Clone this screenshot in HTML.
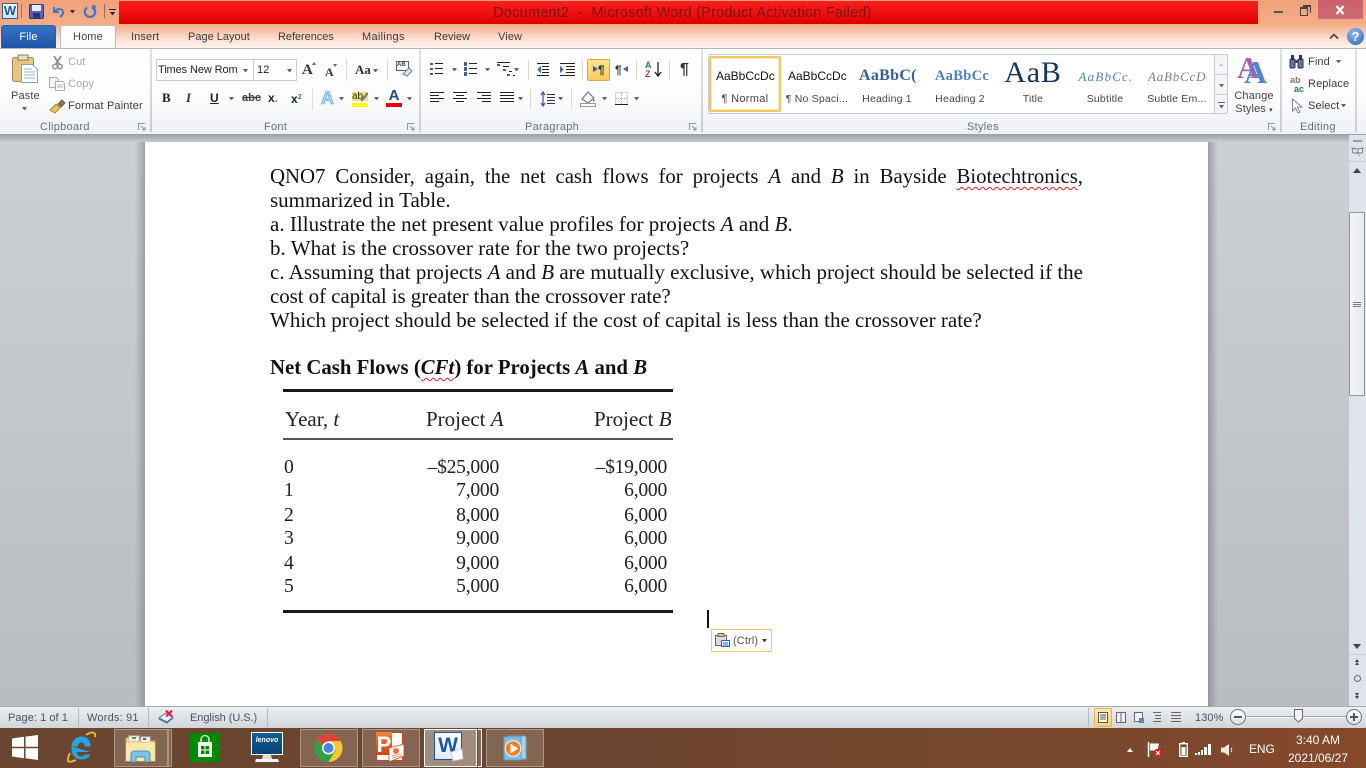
<!DOCTYPE html>
<html><head><meta charset="utf-8"><title>Document2 - Microsoft Word</title>
<style>
html,body{margin:0;padding:0;width:1366px;height:768px;overflow:hidden;background:#ccc}
*{box-sizing:border-box}
.a{position:absolute}
.u{position:absolute;font:11px/14px "Liberation Sans",sans-serif;color:#3c3c3c;white-space:nowrap;letter-spacing:.12px}
.c{text-align:center}
.d{position:absolute;font:21px/24px "Liberation Serif",serif;color:#111;white-space:nowrap;left:270px}
.j{width:813px;text-align:justify;text-align-last:justify;white-space:normal}
.t{position:absolute;font:19.6px/24px "Liberation Serif",serif;color:#222;white-space:nowrap;filter:blur(.35px);letter-spacing:-.25px}
.h{font-size:21px;letter-spacing:0}
.r{text-align:right}
.tr{position:absolute;width:5px;height:0;border-left:2.5px solid transparent;border-right:2.5px solid transparent;border-top:3px solid #666}
.sep{position:absolute;width:1px;background:#d5d8dd}
.gsep{position:absolute;top:49px;height:83px;width:2px;background:linear-gradient(#dfe2e6,#c9ccd2)}
.sq{text-decoration:underline wavy #d22;text-decoration-thickness:1px;text-underline-offset:3px}
.lb{position:absolute;top:121px;font:11px/13px "Liberation Sans",sans-serif;color:#64707f;letter-spacing:.3px;white-space:nowrap}
.st{position:absolute;top:92px;font:10.5px/14px "Liberation Sans",sans-serif;color:#444;letter-spacing:.2px;white-space:nowrap;text-align:center}
.ss{position:absolute;white-space:nowrap;overflow:hidden;text-align:center}
.tb{position:absolute;top:729px;height:38px;background:rgba(255,255,255,.17);border:1px solid rgba(255,255,255,.32)}
svg{position:absolute;overflow:visible}
</style></head><body>

<!-- chrome background -->
<div class="a" style="left:0;top:0;width:1366px;height:48px;background:linear-gradient(#f0a27a 0,#f4ac85 24px,#fbdccd 38px,#fff4ef 48px)"></div>
<div class="a" style="left:119px;top:1px;width:1139px;height:23px;background:linear-gradient(#fb1f1f,#f01010 50%,#dd0000)"></div>
<div class="u c" style="left:119px;top:5px;width:1127px;font-size:14.4px;line-height:16px;color:#7d1010;letter-spacing:.28px">Document2&nbsp; -&nbsp; Microsoft Word (Product Activation Failed)</div>

<!-- QAT -->
<div class="a" style="left:2px;top:3px;width:16px;height:16px;background:linear-gradient(#fff,#cfe0f5);border:1px solid #2a62a8"></div>
<div class="a" style="left:3px;top:3px;width:14px;font:bold 13px/16px 'Liberation Sans',sans-serif;color:#1c56a6;text-align:center">W</div>
<div class="a" style="left:21px;top:4px;width:1px;height:14px;background:#9b7a66"></div>
<svg style="left:29px;top:4px" width="15" height="15"><rect x=".5" y=".5" width="14" height="14" rx="1" fill="#5560c0" stroke="#333a7a"/><rect x="3" y="1" width="9" height="6" fill="#e8ecf5"/><rect x="4" y="9" width="7" height="5" fill="#2e3468"/></svg>
<svg style="left:52px;top:5px" width="13" height="13"><path d="M2 2v5h5M2.5 7C5 3 11 3 11 7.5c0 2-1.500 3.500-3 4.500" fill="none" stroke="#3b78c8" stroke-width="2"/></svg>
<div class="tr" style="left:70px;top:10px;border-top-color:#333"></div>
<svg style="left:83px;top:5px" width="14" height="14"><path d="M4 2.500A5.200 5.200 0 1 0 10 2.500M10 0v4h-.1M10 3l3-2" fill="none" stroke="#3a78c9" stroke-width="2.200"/></svg>
<div class="a" style="left:104px;top:4px;width:1px;height:14px;background:#8f6f5c"></div>
<div class="a" style="left:109px;top:9px;width:7px;height:1px;background:#222"></div>
<div class="tr" style="left:110px;top:12px;border-top-color:#222"></div>

<!-- Window controls -->
<div class="a" style="left:1274px;top:11px;width:9px;height:2px;background:#555;"></div>
<div class="a" style="left:1300px;top:7px;width:8px;height:9px;border:1.500px solid #444;border-top-width:2px"></div>
<div class="a" style="left:1303px;top:5px;width:8px;height:8px;border:1px solid #444;border-top-width:2px;border-left:none;border-bottom:none"></div>
<div class="a" style="left:1318px;top:0;width:45px;height:19px;background:linear-gradient(#c9606a,#cd6d72)"></div>
<svg style="left:1334px;top:5px" width="13" height="10"><path d="M2.500 1l7 8M9.500 1l-7 8" stroke="#fff" stroke-width="2.200"/></svg>

<!-- tabs -->
<div class="a" style="left:1px;top:25px;width:55px;height:23px;background:linear-gradient(#3373c4,#1f55a8);border:1px solid #2a5da8;border-bottom:none;border-radius:3px 3px 0 0"></div>
<div class="u c" style="left:1px;top:30px;width:55px;color:#fff;">File</div>
<div class="a" style="left:60px;top:25px;width:56px;height:24px;background:linear-gradient(#fff,#fafafa);border:1px solid #b8bcc4;border-bottom:none;border-radius:3px 3px 0 0"></div>
<div class="u" style="left:73px;top:30px;color:#444">Home</div>
<div class="u" style="left:131px;top:30px">Insert</div>
<div class="u" style="left:188px;top:30px;letter-spacing:0">Page Layout</div>
<div class="u" style="left:278px;top:30px;letter-spacing:-.05px">References</div>
<div class="u" style="left:362px;top:30px;letter-spacing:.3px">Mailings</div>
<div class="u" style="left:434px;top:30px;letter-spacing:0">Review</div>
<div class="u" style="left:498px;top:30px">View</div>
<svg style="left:1329px;top:33px" width="10" height="7"><path d="M1 5.500L5 1.500l4 4" fill="none" stroke="#444" stroke-width="1.600"/></svg>
<div class="a" style="left:1347px;top:28px;width:17px;height:17px;border-radius:50%;background:radial-gradient(circle at 40% 30%,#8fb6ea,#2a66c0);font:bold 13px/17px 'Liberation Sans',sans-serif;color:#fff;text-align:center">?</div>

<!-- ribbon -->
<div class="a" style="left:0;top:48px;width:1366px;height:87px;background:linear-gradient(#fff 0,#fdfdfe 55%,#eef0f3 100%);border-top:1px solid #b3b8bf;border-bottom:1px solid #9ea2a8"></div>
<div class="gsep" style="left:150px"></div>
<div class="gsep" style="left:419px"></div>
<div class="gsep" style="left:701px"></div>
<div class="gsep" style="left:1280px"></div>
<div class="gsep" style="left:1355px"></div>

<!-- clipboard -->
<svg style="left:12px;top:54px" width="27" height="30"><rect x=".5" y="3.500" width="21" height="24" rx="2" fill="#e7c486" stroke="#a98a5a"/><rect x="6" y="1" width="10" height="5" fill="#e9dcc0" stroke="#8a7a5a"/><path d="M9.500 10.500h11l5 5v13h-16z" fill="#fbfcff" stroke="#8fa0b5"/><path d="M12 15h8M12 18h11M12 21h11M12 24h11" stroke="#9db0c6"/></svg>
<div class="u" style="left:11px;top:89px;color:#444">Paste</div>
<div class="tr" style="left:22px;top:107px"></div>
<svg style="left:51px;top:55px" width="14" height="15"><path d="M3 1l5 8M10 1l-5 8" stroke="#8d8d8d" stroke-width="1.800"/><circle cx="4" cy="11.500" r="2.300" fill="none" stroke="#8d8d8d" stroke-width="1.400"/><circle cx="9" cy="11.500" r="2.300" fill="none" stroke="#8d8d8d" stroke-width="1.400"/></svg>
<div class="u" style="left:68px;top:55px;color:#a4a8ae">Cut</div>
<svg style="left:49px;top:77px" width="16" height="14"><path d="M.5.500h7l2 2v8h-9z" fill="#f2f3f5" stroke="#a8adb4"/><path d="M6.500 4.500h7l2 2v7h-9z" fill="#fafafb" stroke="#a8adb4"/><path d="M8 8h6M8 10h6" stroke="#b5b9c0"/></svg>
<div class="u" style="left:68px;top:77px;color:#a4a8ae">Copy</div>
<svg style="left:49px;top:99px" width="17" height="15"><path d="M9 5l4-4 3 3-4 4z" fill="#8a7a50" stroke="#6a5a3a"/><path d="M1 11l6-6 4 4-5 5c-2-1-3-2-5-3z" fill="#e4c565" stroke="#a88a3a"/></svg>
<div class="u" style="left:68px;top:99px;letter-spacing:.15px">Format Painter</div>
<div class="lb" style="left:40px">Clipboard</div>
<svg style="left:138px;top:123px" width="8" height="8"><path d="M.5 7V.5H7" fill="none" stroke="#8a97a8"/><path d="M3 3l3.500 3.500M7 4v3H4" fill="none" stroke="#8a97a8"/></svg>

<!-- font -->
<div class="a" style="left:156px;top:59px;width:98px;height:22px;background:#fff;border:1px solid #c8ccd2"></div>
<div class="a" style="left:254px;top:59px;width:43px;height:22px;background:#fff;border:1px solid #c8ccd2;border-left:none"></div>
<div class="u" style="left:158px;top:63px;color:#222;letter-spacing:-.1px">Times New Rom</div>
<div class="tr" style="left:243px;top:69px"></div>
<div class="u" style="left:257px;top:63px;color:#222">12</div>
<div class="tr" style="left:287px;top:69px"></div>
<div class="a" style="left:302px;top:60px;font:bold 15px/20px 'Liberation Serif',serif;color:#333">A</div>
<div class="a" style="left:312px;top:62px;width:0;border:2.500px solid transparent;border-bottom:3px solid #3a6fae;border-top:none"></div>
<div class="a" style="left:325px;top:64px;font:bold 12px/16px 'Liberation Serif',serif;color:#333">A</div>
<div class="a" style="left:333px;top:64px;width:0;border:2.500px solid transparent;border-top:3px solid #3a6fae;border-bottom:none"></div>
<div class="a" style="left:346px;top:59px;width:1px;height:22px;background:#d8dbe0"></div>
<div class="a" style="left:355px;top:61px;font:bold 13px/18px 'Liberation Serif',serif;color:#333">Aa</div>
<div class="tr" style="left:373px;top:69px"></div>
<div class="a" style="left:387px;top:59px;width:1px;height:22px;background:#d8dbe0"></div>
<svg style="left:396px;top:61px" width="17" height="18"><rect x=".5" y=".5" width="12" height="9" fill="#fff" stroke="#4a6488"/><path d="M7 13l6-6 3 3-5 5z" fill="#dfe8f2" stroke="#6a7f9a"/></svg>
<div class="a" style="left:397px;top:62px;font:bold 6px/7px 'Liberation Sans',sans-serif;color:#345">AB</div>

<div class="a" style="left:162px;top:89px;font:bold 13px/18px 'Liberation Serif',serif;color:#222">B</div>
<div class="a" style="left:186px;top:89px;font:italic bold 13px/18px 'Liberation Serif',serif;color:#333">I</div>
<div class="a" style="left:210px;top:89px;font:bold 12px/18px 'Liberation Sans',sans-serif;color:#222;text-decoration:underline">U</div>
<div class="tr" style="left:229px;top:97px"></div>
<div class="a" style="left:242px;top:90px;font:bold 11px/16px 'Liberation Sans',sans-serif;color:#444;text-decoration:line-through">abc</div>
<div class="a" style="left:268px;top:90px;font:bold 12px/16px 'Liberation Sans',sans-serif;color:#222">x<span style="font-size:7px;color:#3a6fae">₂</span></div>
<div class="a" style="left:291px;top:90px;font:bold 12px/16px 'Liberation Sans',sans-serif;color:#222">x<span style="font-size:7px;vertical-align:4px;color:#3a6fae">2</span></div>
<div class="a" style="left:312px;top:89px;width:1px;height:21px;background:#d8dbe0"></div>
<div class="a" style="left:321px;top:87px;font:bold 18px/22px 'Liberation Sans',sans-serif;color:#a8d6f4;-webkit-text-stroke:.6px #5a9fd8">A</div>
<div class="tr" style="left:339px;top:97px"></div>
<div class="a" style="left:352px;top:92px;width:16px;height:9px;background:#eee272;font:10px/9px 'Liberation Sans',sans-serif;color:#333">ab</div>
<svg style="left:360px;top:91px" width="9" height="11"><path d="M1 9l6-7 1 1-6 7z" fill="#7a99c2" stroke="#49688f" stroke-width=".7"/></svg>
<div class="a" style="left:352px;top:103px;width:16px;height:4px;background:#ffff00"></div>
<div class="tr" style="left:374px;top:97px"></div>
<div class="a" style="left:386px;top:87px;width:16px;font:bold 15px/17px 'Liberation Sans',sans-serif;color:#25497a;text-align:center">A</div>
<div class="a" style="left:386px;top:103px;width:16px;height:4px;background:#f00000"></div>
<div class="tr" style="left:407px;top:97px"></div>
<div class="lb" style="left:264px">Font</div>
<svg style="left:407px;top:123px" width="8" height="8"><path d="M.5 7V.5H7" fill="none" stroke="#8a97a8"/><path d="M3 3l3.500 3.500M7 4v3H4" fill="none" stroke="#8a97a8"/></svg>

<!-- paragraph row 1 -->
<svg style="left:429px;top:62px" width="290" height="16" shape-rendering="crispEdges">
<g fill="#3a62a0"><rect x="1" y="1" width="3" height="2"/><rect x="1" y="6" width="3" height="2"/><rect x="1" y="11" width="3" height="2"/><rect x="35" y="0" width="3" height="4"/><rect x="35" y="5" width="3" height="4"/><rect x="35" y="10" width="3" height="4"/><rect x="68" y="2" width="3" height="2"/><rect x="74" y="7" width="3" height="2"/><rect x="78" y="12" width="3" height="2"/></g>
<path d="M6 1.500h8M6 6.500h8M6 11.500h8M40 1.500h8M40 6.500h8M40 11.500h8M68 .500h13M74 4.500h6M80 9.500h3M84 13.500h2" stroke="#222" fill="none"/>
<path d="M108 1.500h12M113 4.500h7M113 7.500h7M113 10.500h7M108 13.500h12M131 1.500h15M137 4.500h9M137 7.500h9M137 10.500h9M131 13.500h15" stroke="#222" fill="none"/>
<path d="M112 4l-4 3.500 4 3.500zM131 4l4 3.500-4 3.500z" fill="#3a6fc0"/>
</svg>
<div class="tr" style="left:452px;top:68px"></div>
<div class="tr" style="left:485px;top:68px"></div>
<div class="tr" style="left:514px;top:68px"></div>
<div class="sep" style="left:528px;top:60px;height:20px"></div>
<div class="sep" style="left:582px;top:60px;height:20px"></div>
<div class="a" style="left:587px;top:59px;width:23px;height:22px;background:linear-gradient(#ffe590,#fcc95d);border:1px solid #d7a94c;border-radius:2px;font:bold 12px/20px 'Liberation Sans',sans-serif;color:#333;padding-left:10px">¶</div>
<div class="a" style="left:593px;top:66px;width:0;border-style:solid;border-width:3.500px 0 3.500px 5px;border-color:transparent transparent transparent #2f63b2"></div>
<div class="a" style="left:615px;top:59px;font:bold 12px/22px 'Liberation Sans',sans-serif;color:#333">¶</div>
<div class="a" style="left:623px;top:66px;width:0;border-style:solid;border-width:3.500px 5px 3.500px 0;border-color:transparent #2f63b2 transparent transparent"></div>
<div class="sep" style="left:636px;top:60px;height:20px"></div>
<div class="a" style="left:645px;top:61px;font:bold 9px/9px 'Liberation Sans',sans-serif;color:#3a62a0">A</div>
<div class="a" style="left:645px;top:70px;font:bold 9px/9px 'Liberation Sans',sans-serif;color:#a44">Z</div>
<svg style="left:654px;top:62px" width="8" height="16"><path d="M4 0v13M1 10l3 4 3-4" fill="none" stroke="#222" stroke-width="1.300"/></svg>
<div class="sep" style="left:669px;top:60px;height:20px"></div>
<div class="a" style="left:680px;top:60px;font:bold 16px/20px 'Liberation Sans',sans-serif;color:#333">¶</div>

<!-- paragraph row 2 -->
<svg style="left:430px;top:92px" width="100" height="14" shape-rendering="crispEdges"><path d="M0 .500h14M0 3.500h9M0 6.500h14M0 9.500h9M23 .500h14M26 3.500h8M23 6.500h14M26 9.500h8M47 .500h14M52 3.500h9M47 6.500h14M52 9.500h9M70 .500h14M70 3.500h14M70 6.500h14M70 9.500h14" stroke="#222" fill="none"/></svg>
<div class="tr" style="left:518px;top:97px"></div>
<div class="sep" style="left:530px;top:89px;height:20px"></div>
<svg style="left:540px;top:91px" width="22" height="16"><path d="M3 1v14M1 4l2-3 2 3M1 12l2 3 2-3" fill="none" stroke="#2f63b2" stroke-width="1.300"/><path d="M7 3.500h8M7 6.500h8M7 9.500h8M7 12.500h8" stroke="#333"/></svg>
<div class="tr" style="left:558px;top:97px"></div>
<div class="sep" style="left:571px;top:89px;height:20px"></div>
<svg style="left:580px;top:90px" width="17" height="17"><path d="M2 9l6-7 6 6-6 5z" fill="#f3f5f8" stroke="#667"/><path d="M13 8c2 2 2 4 1 4-1 0-1-2-1-4z" fill="#4c86c8"/><rect x=".5" y="13.500" width="15" height="3" fill="#fff" stroke="#999"/></svg>
<div class="tr" style="left:602px;top:97px"></div>
<svg style="left:615px;top:92px" width="13" height="13"><rect x=".5" y=".5" width="12" height="12" fill="none" stroke="#aaa" stroke-dasharray="1 1"/><path d="M6.500 1v11M1 6.500h11" stroke="#aaa" stroke-dasharray="1 1"/><path d="M0 12.500h13" stroke="#222"/></svg>
<div class="tr" style="left:634px;top:97px"></div>
<div class="lb" style="left:525px">Paragraph</div>
<svg style="left:689px;top:123px" width="8" height="8"><path d="M.5 7V.5H7" fill="none" stroke="#8a97a8"/><path d="M3 3l3.500 3.500M7 4v3H4" fill="none" stroke="#8a97a8"/></svg>

<!-- styles -->
<div class="a" style="left:708px;top:54px;width:520px;height:60px;background:#fff;border:1px solid #c6cad1;border-radius:2px"></div>
<div class="a" style="left:709px;top:56px;width:72px;height:56px;background:#fff;border:2px solid #f2c865;border-radius:2px;box-shadow:inset 0 0 0 1px #fbeab8"></div>
<div class="ss" style="left:716px;top:69px;width:59px;font:12px/15px 'Liberation Sans',sans-serif;color:#111;text-align:left">AaBbCcDc</div>
<div class="ss" style="left:788px;top:69px;width:59px;font:12px/15px 'Liberation Sans',sans-serif;color:#111;text-align:left">AaBbCcDc</div>
<div class="ss" style="left:859px;top:66px;width:62px;font:bold 16px/20px 'Liberation Serif',serif;color:#376092;letter-spacing:.3px;text-align:left">AaBbC(</div>
<div class="ss" style="left:931px;top:67px;width:62px;font:bold 14.500px/18px 'Liberation Serif',serif;color:#4f81bd;letter-spacing:.3px">AaBbCc</div>
<div class="ss" style="left:1002px;top:61px;height:26px;width:62px;font:30px/24px 'Liberation Serif',serif;color:#17365d;letter-spacing:.8px">AaB</div>
<div class="ss" style="left:1075px;top:68px;width:62px;font:italic 13px/17px 'Liberation Serif',serif;color:#4f81bd;letter-spacing:1.200px">AaBbCc.</div>
<div class="ss" style="left:1148px;top:68px;width:59px;font:italic 13px/17px 'Liberation Serif',serif;color:#7f7f7f;letter-spacing:.8px;text-align:left">AaBbCcDc</div>
<div class="st" style="left:709px;width:72px;font-size:11px;letter-spacing:.3px">¶ Normal</div>
<div class="st" style="left:781px;width:72px">¶ No Spaci...</div>
<div class="st" style="width:72px;left:851px">Heading 1</div>
<div class="st" style="width:72px;left:924px">Heading 2</div>
<div class="st" style="left:997px;width:72px">Title</div>
<div class="st" style="left:1069px;width:72px">Subtitle</div>
<div class="st" style="left:1141px;width:72px">Subtle Em...</div>
<div class="a" style="left:1214px;top:54px;width:14px;height:60px;background:#f3f5f8;border:1px solid #c6cad1;border-radius:0 2px 2px 0"></div>
<div class="a" style="left:1215px;top:74px;width:12px;height:1px;background:#c6cad1"></div>
<div class="a" style="left:1215px;top:94px;width:12px;height:1px;background:#c6cad1"></div>
<div class="a" style="left:1219px;top:63px;width:0;border:2.500px solid transparent;border-bottom:3px solid #c0c3c8;border-top:none"></div>
<div class="tr" style="left:1219px;top:84px"></div>
<div class="a" style="left:1218px;top:102px;width:7px;height:1px;background:#666"></div>
<div class="tr" style="left:1219px;top:105px"></div>
<div class="a" style="left:1237px;top:50px;font:bold 31px/36px 'Liberation Serif',serif;color:#a44db0;opacity:.9">A</div>
<div class="a" style="left:1244px;top:54px;font:bold 32px/36px 'Liberation Serif',serif;color:#4f86cc;">A</div>
<div class="u c" style="left:1231px;top:90px;width:46px;line-height:13px;color:#444">Change<br>Styles&nbsp;<span style="font-size:7px">▾</span></div>
<div class="lb" style="left:967px">Styles</div>
<svg style="left:1268px;top:123px" width="8" height="8"><path d="M.5 7V.5H7" fill="none" stroke="#8a97a8"/><path d="M3 3l3.500 3.500M7 4v3H4" fill="none" stroke="#8a97a8"/></svg>

<!-- editing -->
<svg style="left:1289px;top:55px" width="15" height="14"><rect x="1" y="4" width="5" height="9" rx="1" fill="#5778a8" stroke="#334"/><rect x="9" y="4" width="5" height="9" rx="1" fill="#5778a8" stroke="#334"/><rect x="2" y="0" width="3" height="5" fill="#334"/><rect x="10" y="0" width="3" height="5" fill="#334"/><rect x="6" y="5" width="3" height="3" fill="#445"/></svg>
<div class="u" style="left:1308px;top:55px">Find</div><div class="tr" style="left:1336px;top:60px"></div>
<div class="a" style="left:1290px;top:76px;font:bold 9px/9px 'Liberation Sans',sans-serif;color:#777">ab</div>
<div class="a" style="left:1294px;top:85px;font:bold 9px/9px 'Liberation Sans',sans-serif;color:#2a8a3a"><span style="color:#3a62a0">a</span>c</div>
<div class="u" style="left:1308px;top:77px">Replace</div>
<svg style="left:1291px;top:98px" width="13" height="16"><path d="M1.500 1v12l3-3 2.500 5 2-1-2.500-5h4.500z" fill="#fff" stroke="#7a8a9c"/></svg>
<div class="u" style="left:1308px;top:99px">Select</div><div class="tr" style="left:1341px;top:104px"></div>
<div class="lb" style="left:1300px">Editing</div>

<!-- document area -->
<div class="a" style="left:0;top:135px;width:1349px;height:572px;background:linear-gradient(#cdd0d5,#b9bcc0)"></div>
<div class="a" style="left:0;top:135px;width:1366px;height:7px;background:linear-gradient(#a0a4a9,#c9ccd1)"></div>
<div class="a" style="left:135px;top:142px;width:10px;height:565px;background:linear-gradient(90deg,rgba(120,124,130,0),rgba(120,124,130,.55))"></div>
<div class="a" style="left:1208px;top:142px;width:10px;height:565px;background:linear-gradient(90deg,rgba(120,124,130,.6),rgba(120,124,130,0))"></div>
<div class="a" style="left:145px;top:142px;width:1063px;height:565px;background:#fff"></div>

<div class="d j" style="top:165px;font-size:20.8px">QNO7 Consider, again, the net cash flows for projects <i>A</i> and <i>B</i> in Bayside <span class="sq">Biotechtronics</span>,</div>
<div class="d" style="top:188px">summarized in Table.</div>
<div class="d" style="top:212px;letter-spacing:.03px">a. Illustrate the net present value profiles for projects <i>A</i> and <i>B</i>.</div>
<div class="d" style="top:236px;letter-spacing:.04px">b. What is the crossover rate for the two projects?</div>
<div class="d j" style="top:260px">c. Assuming that projects <i>A</i> and <i>B</i> are mutually exclusive, which project should be selected if the</div>
<div class="d" style="top:284px;letter-spacing:-.08px">cost of capital is greater than the crossover rate?</div>
<div class="d" style="top:308px;letter-spacing:.01px">Which project should be selected if the cost of capital is less than the crossover rate?</div>
<div class="d" style="top:356px;font-weight:bold;font-size:20.8px">Net Cash Flows (<i class="sq">CFt</i>) for Projects <i>A</i> and <i>B</i></div>

<div class="a" style="left:283px;top:389px;width:390px;height:2.500px;background:#1a1a1a"></div>
<div class="a" style="left:283px;top:438px;width:390px;height:1.500px;background:#555"></div>
<div class="a" style="left:283px;top:610px;width:390px;height:2.500px;background:#1a1a1a"></div>
<div class="t h" style="left:285px;top:407px">Year, <i>t</i></div>
<div class="t h" style="left:426px;top:407px">Project <i>A</i></div>
<div class="t h" style="left:594px;top:407px">Project <i>B</i></div>

<div class="t" style="left:284px;top:456px">0</div><div class="t r" style="left:399px;width:100px;top:456px">–$25,000</div><div class="t r" style="left:567px;width:100px;top:456px">–$19,000</div>
<div class="t" style="left:284px;top:479px">1</div><div class="t r" style="left:399px;width:100px;top:479px">7,000</div><div class="t r" style="left:567px;width:100px;top:479px">6,000</div>
<div class="t" style="left:284px;top:504px">2</div><div class="t r" style="left:399px;width:100px;top:504px">8,000</div><div class="t r" style="left:567px;width:100px;top:504px">6,000</div>
<div class="t" style="left:284px;top:527px">3</div><div class="t r" style="left:399px;width:100px;top:527px">9,000</div><div class="t r" style="left:567px;width:100px;top:527px">6,000</div>
<div class="t" style="left:284px;top:552px">4</div><div class="t r" style="left:399px;width:100px;top:552px">9,000</div><div class="t r" style="left:567px;width:100px;top:552px">6,000</div>
<div class="t" style="left:284px;top:575px">5</div><div class="t r" style="left:399px;width:100px;top:575px">5,000</div><div class="t r" style="left:567px;width:100px;top:575px">6,000</div>

<div class="a" style="left:707px;top:610px;width:2px;height:18px;background:#111"></div>
<div class="a" style="left:711px;top:629px;width:61px;height:23px;background:#fff;border:1px solid #eccb66"></div>
<svg style="left:715px;top:633px" width="16" height="15"><rect x=".5" y="2.500" width="11" height="10" fill="#ddd" stroke="#666"/><rect x="3" y=".5" width="6" height="3" fill="#e9c873" stroke="#666"/><rect x="6.500" y="7.500" width="8" height="6" fill="#fff" stroke="#2462c4"/><path d="M8 10h5M8 12h5" stroke="#2462c4"/></svg>
<div class="u" style="left:733px;top:634px;color:#555">(Ctrl)</div>
<div class="tr" style="left:762px;top:639px;border-top-color:#444"></div>

<!-- scrollbar -->
<div class="a" style="left:1349px;top:135px;width:17px;height:572px;background:#dfe3eb"></div>
<div class="a" style="left:1353px;top:140px;width:9px;height:2px;background:#999"></div>
<svg style="left:1351px;top:146px" width="13" height="13"><path d="M1 2l6 1v4H2zM6 7h5l1-5-5 1" fill="#f2f3f5" stroke="#777"/><path d="M3 3l6 7" stroke="#888" stroke-dasharray="1 1"/></svg>
<div class="a" style="left:1349px;top:161px;width:17px;height:1px;background:#c6cad1"></div>
<div class="a" style="left:1353px;top:168px;width:0;border:4.500px solid transparent;border-bottom:5px solid #444;border-top:none"></div>
<div class="a" style="left:1349px;top:212px;width:16px;height:184px;background:linear-gradient(90deg,#f4f6f9,#e6e9ee);border:1px solid #8e949d;border-radius:1px"></div>
<div class="a" style="left:1353px;top:302px;width:8px;height:5px;border-top:1px solid #777;border-bottom:1px solid #777"></div>
<div class="a" style="left:1353px;top:304px;width:8px;height:1px;background:#777"></div>
<div class="a" style="left:1353px;top:644px;width:0;border:4.500px solid transparent;border-top:5px solid #444;border-bottom:none"></div>
<div class="a" style="left:1349px;top:654px;width:17px;height:1px;background:#c6cad1"></div>
<div class="a" style="left:1355px;top:659px;width:0;border:2.500px solid transparent;border-bottom:3px solid #444;border-top:none"></div>
<div class="a" style="left:1355px;top:662px;width:0;border:2.500px solid transparent;border-bottom:3px solid #444;border-top:none"></div>
<div class="a" style="left:1354px;top:675px;width:7px;height:7px;border:1px solid #666;border-radius:50%"></div>
<div class="a" style="left:1355px;top:693px;width:0;border:2.500px solid transparent;border-top:3px solid #444;border-bottom:none"></div>
<div class="a" style="left:1355px;top:696px;width:0;border:2.500px solid transparent;border-top:3px solid #444;border-bottom:none"></div>

<!-- status bar -->
<div class="a" style="left:0;top:706px;width:1366px;height:22px;background:linear-gradient(#eceef1,#d2d6dc);border-top:1px solid #a7abb1"></div>
<div class="u" style="left:8px;top:711px;color:#4a5260;letter-spacing:.05px">Page: 1 of 1</div>
<div class="a" style="left:78px;top:708px;width:1px;height:19px;background:#b6bac1"></div>
<div class="u" style="left:87px;top:711px;color:#4a5260;letter-spacing:.2px">Words: 91</div>
<div class="a" style="left:148px;top:708px;width:1px;height:19px;background:#b6bac1"></div>
<svg style="left:158px;top:709px" width="16" height="16"><path d="M1 9l7-5 7 4-6 5z" fill="#eef1f6" stroke="#5a6f92"/><path d="M1 10l8 4 6-5" fill="none" stroke="#5a6f92"/><path d="M8 1.500l6 6M14 1.500l-6 6" stroke="#d23" stroke-width="2"/></svg>
<div class="u" style="left:190px;top:711px;color:#4a5260;letter-spacing:-.05px">English (U.S.)</div>
<div class="a" style="left:267px;top:708px;width:1px;height:19px;background:#b6bac1"></div>

<div class="a" style="left:1088px;top:708px;width:1px;height:19px;background:#b6bac1"></div>
<div class="a" style="left:1094px;top:708px;width:18px;height:19px;background:linear-gradient(#ffe9a8,#fdd272);border:1px solid #dcb458;border-radius:2px"></div>
<svg style="left:1098px;top:712px" width="100" height="12" shape-rendering="crispEdges">
<rect x=".5" y=".5" width="9" height="10" fill="#fff" stroke="#555"/><path d="M2 3h6M2 5h6M2 7h6" stroke="#555"/>
<rect x="18.500" y=".5" width="9" height="10" fill="#eef" stroke="#666"/><path d="M23 1v9" stroke="#666"/>
<rect x="36.500" y=".5" width="8" height="9" fill="#f5f5f5" stroke="#666"/><rect x="41" y="6" width="5" height="5" fill="#4a8bc5"/>
<path d="M55 .500h8M57 3.500h6M57 6.500h6M55 9.500h8" stroke="#666"/>
<path d="M73 .500h10M73 3.500h10M73 6.500h10M73 9.500h10" stroke="#666"/>
</svg>
<div class="u" style="left:1195px;top:711px;color:#4a5260;letter-spacing:.1px">130%</div>
<div class="a" style="left:1230px;top:709px;width:16px;height:16px;border-radius:50%;background:linear-gradient(#fff,#dde0e5);border:1px solid #6f7680"></div>
<div class="a" style="left:1234px;top:716px;width:8px;height:2px;background:#555"></div>
<div class="a" style="left:1247px;top:716px;width:99px;height:1px;background:#9aa0a8;box-shadow:0 1px 0 #fff"></div>
<svg style="left:1294px;top:709px" width="10" height="14"><path d="M.5.500h8v9l-4 3.500-4-3.500z" fill="#f4f5f7" stroke="#666"/></svg>
<div class="a" style="left:1346px;top:709px;width:16px;height:16px;border-radius:50%;background:linear-gradient(#fff,#dde0e5);border:1px solid #6f7680"></div>
<div class="a" style="left:1350px;top:716px;width:8px;height:2px;background:#555"></div>
<div class="a" style="left:1353px;top:713px;width:2px;height:8px;background:#555"></div>

<!-- taskbar -->
<div class="a" style="left:0;top:728px;width:1366px;height:40px;background:linear-gradient(90deg,#6a4630 0,#6a4630 40%,#74472e 70%,#85492b 100%)"></div>
<svg style="left:12px;top:735px" width="26" height="25"><path d="M0 3.500l12-1.700v10H0zM13.500 1.600L26 0v11.800H13.500zM0 13.200h12v10L0 21.500zM13.500 13.200H26V25l-12.500-1.700z" fill="#fff"/></svg>
<svg style="left:66px;top:732px" width="30" height="31"><path d="M6 14.500h18.500c0-7-4-10-9-10-6 0-10 5-10 12 0 7 4 11 10 11 5 0 7.500-2 9-5h-6c-1 1.500-2 2-3.500 2-2.500 0-4-1.800-4-4.500h13.500M12 14.500c0-2.500 1.500-4 3.500-4s3 1.500 3 4z" fill="#29a3e0" fill-rule="evenodd"/><path d="M20 3C26-1 30 0 29 5M4 21C0 29 1 32 10 28" fill="none" stroke="#f0c020" stroke-width="1.800"/></svg>
<div class="tb" style="left:114px;width:54px"></div><div class="tb" style="left:168px;width:4px"></div>
<svg style="left:125px;top:734px" width="31" height="30"><path d="M1 4h11l2 3h16v20H1z" fill="#f5d987" stroke="#c9a858"/><rect x="4" y="2" width="10" height="5" fill="#fff" stroke="#c8c8c8"/><rect x="7" y="3" width="4" height="2" fill="#3aae3a"/><rect x="16" y="3" width="9" height="5" fill="#fff" stroke="#c8c8c8"/><rect x="18" y="4" width="3" height="2" fill="#d33"/><path d="M1 9h29v18H1z" fill="#fbe7a8"/><path d="M6 28v-8c0-2 2-3 4-3h11c2 0 4 1 4 3v8h-5v-5h-9v5z" fill="#7dc3e8" stroke="#4a8fb8"/></svg>
<div class="a" style="left:190px;top:733px;width:30px;height:29px;background:#008a00"></div>
<svg style="left:195px;top:736px" width="20" height="23"><path d="M6 6V3.500a4 4 0 0 1 8 0V6" fill="none" stroke="#fff" stroke-width="1.300"/><rect x="3" y="6" width="14" height="15" fill="#fff"/><path d="M6 10h3.500v3.500H6zM10.500 10H14v3.500h-3.500zM6 14.500h3.500V18H6zM10.500 14.500H14V18h-3.500z" fill="#008a00"/></svg>
<div class="a" style="left:251px;top:732px;width:32px;height:23px;background:linear-gradient(#0e5f96,#0a4473);border:1px solid #fff;font:italic bold 7px/15px 'Liberation Sans',sans-serif;color:#fff;text-align:center">lenovo</div>
<svg style="left:252px;top:755px" width="30" height="9"><path d="M11 0h8l1 4h-10z" fill="#ddd"/><path d="M4 4h22l1 3H3z" fill="#f5f5f5"/></svg>
<div class="tb" style="left:300px;width:58px"></div>
<svg style="left:314px;top:733px" width="29" height="30" viewBox="0 0 28 30"><circle cx="14" cy="15" r="14" fill="#fbc52f"/><path d="M14 15L1.900 8A14 14 0 0 1 26.100 8H14z" fill="#de4238"/><path d="M14 15L1.900 8A14 14 0 0 0 14 29l7-12z" fill="#2ba24c"/><circle cx="14" cy="15" r="6.500" fill="#fff"/><circle cx="14" cy="15" r="5" fill="#4c83dd"/></svg>
<div class="tb" style="left:362px;width:58px"></div>
<div class="a" style="left:376px;top:732px;width:27px;height:29px;background:#fff;border:1.500px solid #d2451e"></div>
<div class="a" style="left:376px;top:732px;width:16px;height:23px;background:linear-gradient(#f0823d,#cf4517);font:bold 22px/25px 'Liberation Sans',sans-serif;color:#fff;text-align:center">P</div>
<svg style="left:387px;top:743px" width="18" height="20"><path d="M2 5l15-4v12L2 19z" fill="#fff" stroke="#d2451e" stroke-width=".8"/><circle cx="9" cy="8" r="3" fill="#e9713a"/><path d="M5 13l9-2M5 15l9-2" stroke="#e9a27a"/></svg>
<div class="tb" style="left:424px;width:53px;background:rgba(255,255,255,.38);border:1px solid #fff"></div><div class="tb" style="left:478px;width:4px;border:1px solid #fff;border-left:none"></div>
<div class="a" style="left:434px;top:732px;width:28px;height:28px;background:linear-gradient(#fff,#dfe9f7);border:1.500px solid #1d56a8;font:bold 21px/26px 'Liberation Sans',sans-serif;color:#1d56a8;text-align:center">W</div>
<svg style="left:450px;top:748px" width="14" height="14"><path d="M1 4l11-3 1 10-10 2z" fill="#fff" stroke="#bcc9d9" stroke-width=".7"/></svg>
<div class="tb" style="left:486px;width:58px"></div>
<svg style="left:501px;top:734px" width="26" height="28"><path d="M7 2h16a2 2 0 0 1 2 2v21H7z" fill="#a9cfe5" stroke="#7ba6c2"/><path d="M3 3h17v23H3z" fill="#7ec0e0" stroke="#5f9ec2"/><circle cx="12" cy="14.500" r="7.800" fill="#f08020" stroke="#fff" stroke-width="1"/><path d="M9.500 9.500v10l7.500-5z" fill="#fff"/></svg>

<!-- tray -->
<div class="a" style="left:1127px;top:748px;width:0;border:3.500px solid transparent;border-bottom:4px solid #fff;border-top:none"></div>
<svg style="left:1147px;top:742px" width="17" height="16"><path d="M1.500 0v15" stroke="#fff" stroke-width="1.500"/><path d="M3 1.500h9l-1 4 1 3H3z" fill="#fff"/><circle cx="11" cy="11" r="4.500" fill="#d81e1e"/><path d="M9 9l4 4M13 9l-4 4" stroke="#fff" stroke-width="1.200"/></svg>
<svg style="left:1179px;top:742px" width="9" height="15"><rect x="3" y="0" width="3" height="2" fill="#fff"/><rect x=".7" y="1.700" width="7.600" height="12.600" fill="none" stroke="#fff" stroke-width="1.400"/><rect x="2.500" y="5" width="4" height="8" fill="#fff"/></svg>
<svg style="left:1195px;top:743px" width="17" height="13" shape-rendering="crispEdges"><g fill="#fff"><rect x="0" y="10" width="2" height="2"/><rect x="3" y="9" width="2" height="3"/><rect x="6" y="7" width="2" height="5"/><rect x="9" y="4" width="3" height="8"/><rect x="13" y="1" width="3" height="11"/></g></svg>
<svg style="left:1221px;top:743px" width="14" height="14"><path d="M0 4.500h3L8 1v12L3 9.500H0z" fill="#f5e9df"/><path d="M10 5a3 3 0 0 1 0 4" fill="none" stroke="#f5e9df"/></svg>
<div class="u" style="left:1249px;top:742px;color:#fff;font-size:12px;letter-spacing:-.1px">ENG</div>
<div class="u c" style="left:1283px;top:733px;width:70px;color:#fff;font-size:12px;line-height:15px;letter-spacing:0">3:40 AM</div>
<div class="u c" style="left:1283px;top:751px;width:70px;color:#fff;font-size:12px;line-height:15px;letter-spacing:0">2021/06/27</div>
</body></html>
